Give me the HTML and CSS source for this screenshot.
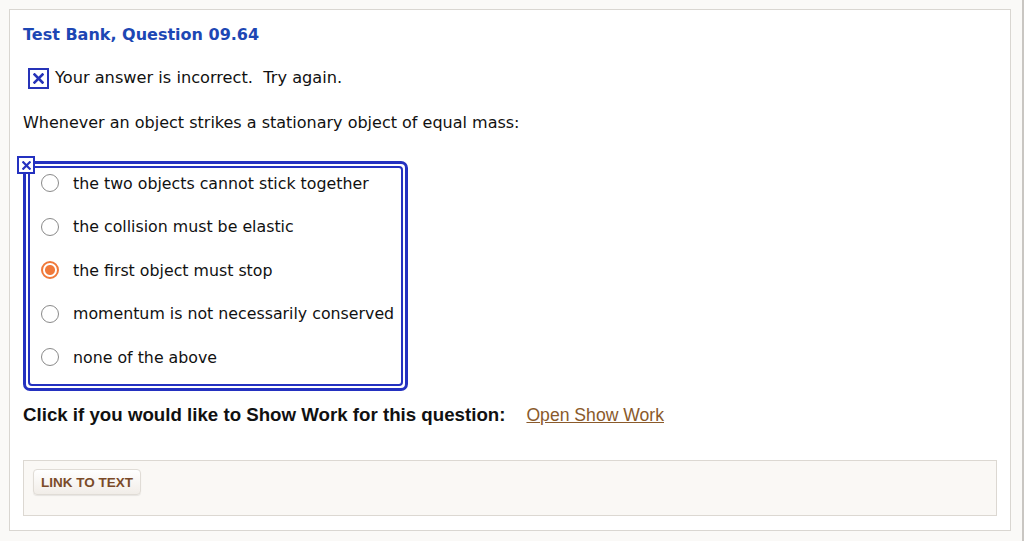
FILE: index.html
```html
<!DOCTYPE html>
<html lang="en">
<head>
    <meta charset="UTF-8">
    <title>Test Bank, Question 09.64</title>
    <link rel="stylesheet" href="styles.css">
</head>
<body>
    <div class="page">
        <div class="panel">
            <h2 class="title">Test Bank, Question 09.64</h2>

            <div class="feedback">
                <span class="x-icon">
                    <svg width="11" height="11" viewBox="0 0 11 11"><path d="M1.5 1.5 L9.5 9.5 M9.5 1.5 L1.5 9.5" stroke="#2633b8" stroke-width="2.6" stroke-linecap="square"/></svg>
                </span>
                Your answer is incorrect.&nbsp; Try again.
            </div>

            <p class="question">Whenever an object strikes a stationary object of equal mass:</p>

            <div class="answers">
                <span class="x-badge">
                    <svg width="9" height="9" viewBox="0 0 9 9"><path d="M1.3 1.3 L7.7 7.7 M7.7 1.3 L1.3 7.7" stroke="#2431c0" stroke-width="2.2" stroke-linecap="square"/></svg>
                </span>
                <div class="answers-inner">
                    <label class="option"><span class="radio"></span>the two objects cannot stick together</label>
                    <label class="option"><span class="radio"></span>the collision must be elastic</label>
                    <label class="option"><span class="radio checked"></span>the first object must stop</label>
                    <label class="option"><span class="radio"></span>momentum is not necessarily conserved</label>
                    <label class="option"><span class="radio"></span>none of the above</label>
                </div>
            </div>

            <div class="show-work">
                <strong>Click if you would like to Show Work for this question:</strong>
                <a href="#" class="work-link">Open Show Work</a>
            </div>

            <div class="resources">
                <button class="btn">LINK TO TEXT</button>
            </div>
        </div>
    </div>
</body>
</html>
```

FILE: styles.css
```css
* {
    margin: 0;
    padding: 0;
    box-sizing: border-box;
}

html, body {
    width: 100%;
    height: 100%;
    background: #faf9f7;
    overflow: hidden;
}

body {
    font-family: 'DejaVu Sans', Verdana, sans-serif;
    color: #111;
    border-right: 2px solid #c9c6c2;
}

.page {
    padding: 9px 11px 10px 9px;
    height: 100%;
}

/* Pannello principale */
.panel {
    background: #fff;
    border: 1px solid #d9d6d1;
    height: 100%;
    padding: 15px 13px 13px 13px;
}

.title {
    font-size: 16px;
    font-weight: bold;
    color: #1d47b4;
    line-height: 20px;
}

.feedback {
    display: flex;
    align-items: center;
    gap: 6px;
    margin-top: 22px;
    margin-left: 5px;
    font-size: 16.2px;
    line-height: 22px;
}

.x-icon {
    width: 21px;
    height: 21px;
    border: 2px solid #2633b8;
    display: flex;
    align-items: center;
    justify-content: center;
}

.question {
    margin-top: 23px;
    font-size: 16px;
    line-height: 22px;
}

/* Riquadro risposte */
.answers {
    position: relative;
    width: 385px;
    margin-top: 27px;
    border: 3px solid #2431c0;
    border-radius: 7px;
    padding: 2px;
}

.answers-inner {
    border: 2px solid #2431c0;
    border-radius: 4px;
    padding: 0 0 12px 0;
    display: flex;
    flex-direction: column;
    gap: 13.6px;
}

.x-badge {
    position: absolute;
    left: -9px;
    top: -8px;
    width: 18px;
    height: 18px;
    background: #fff;
    border: 2px solid #2431c0;
    display: flex;
    align-items: center;
    justify-content: center;
}

.option {
    display: flex;
    align-items: center;
    height: 30px;
    padding-left: 11px;
    font-size: 15.8px;
    white-space: nowrap;
}

.radio {
    width: 18px;
    height: 18px;
    border: 1px solid #8a8a8a;
    border-radius: 50%;
    margin-right: 14px;
    flex-shrink: 0;
    background: #fff;
}

.radio.checked {
    border: 2px solid #f0793a;
    background: radial-gradient(circle, #f0793a 0 4.5px, #fff 5.5px);
}

.show-work {
    margin-top: 13px;
    display: flex;
    align-items: baseline;
    gap: 21px;
    font-family: 'Liberation Sans', Arial, sans-serif;
    font-size: 18.7px;
}

.work-link {
    color: #8a5a2b;
    font-size: 17.6px;
}

/* Risorse */
.resources {
    margin-top: 34px;
    background: #faf8f5;
    border: 1px solid #dcd8d2;
    height: 56px;
    padding: 8px 9px;
}

.btn {
    font-family: 'Liberation Sans', Arial, sans-serif;
    font-size: 13.5px;
    font-weight: bold;
    color: #7b4a28;
    height: 26px;
    padding: 0 7px;
    border: 1px solid #e0dcd6;
    border-radius: 4px;
    background: linear-gradient(#fff, #f1ede8);
    box-shadow: 0 1px 1px rgba(0,0,0,0.08);
}
```
